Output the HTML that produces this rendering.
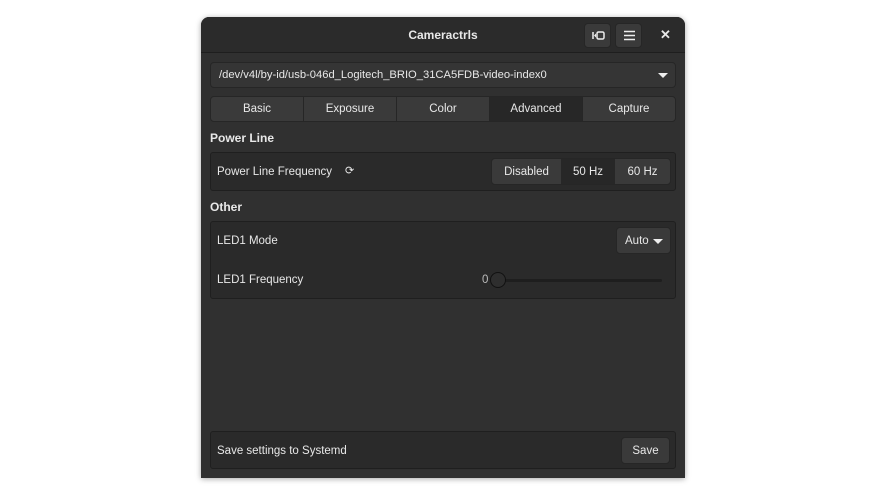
<!DOCTYPE html><html><head><style>
*{box-sizing:border-box;margin:0;padding:0}
body{width:888px;height:500px;background:#fff;font-family:"Liberation Sans",sans-serif;font-size:11.5px;color:#e8e8e8;position:relative;overflow:hidden}
.win{position:absolute;left:201px;top:17px;width:484px;height:461px;background:#303030;border-radius:8px 8px 0 0;box-shadow:0 1px 6px rgba(0,0,0,.35);overflow:hidden}
.hdr{position:absolute;left:0;top:0;width:484px;height:36px;background:#2b2b2b;border-bottom:1px solid #1e1e1e}
.a{position:absolute}
.btn{position:absolute;background:#3a3a3a;border:1px solid #262626;border-radius:4px;text-align:center}
.box{position:absolute;left:9px;width:466px;background:#2a2a2a;border:1px solid #1f1f1f;border-radius:3px}
.lbl{position:absolute;font-size:11.5px}
.h{position:absolute;left:9px;font-weight:bold;font-size:12px}
</style></head><body>
<div class="win">
 <div class="hdr">
  <div class="a" style="left:0;width:484px;top:11px;text-align:center;font-weight:bold;font-size:12px">Cameractrls</div>
  <div class="btn" style="left:383px;top:6px;width:27px;height:25px"><svg width="27" height="23" viewBox="0 0 27 23"><path d="M8 8v7" stroke="#eee" stroke-width="1.5"/><path d="M9 11.5l2-2v4z" fill="#eee"/><rect x="12" y="8" width="7" height="7" rx="1.5" fill="none" stroke="#eee" stroke-width="1.5"/></svg></div>
  <div class="btn" style="left:414px;top:6px;width:27px;height:25px"><svg width="27" height="23" viewBox="0 0 27 23"><path d="M8 7.5h11M8 11.5h11M8 15.5h11" stroke="#eee" stroke-width="1.5"/></svg></div>
  <div class="a" style="left:459px;top:10px;font-size:13px;font-weight:bold">✕</div>
 </div>
 <div class="btn" style="left:9px;top:45px;width:466px;height:26px;text-align:left;background:#353535"><span class="a" style="left:8px;top:6px;font-size:11.2px">/dev/v4l/by-id/usb-046d_Logitech_BRIO_31CA5FDB-video-index0</span><svg class="a" style="left:447px;top:9px" width="10" height="7"><path d="M0 1h10L5 6z" fill="#eee"/></svg></div>
 <div class="a" style="left:9px;top:79px;width:466px;height:26px;border:1px solid #262626;border-radius:4px;background:#3a3a3a;display:flex;overflow:hidden">
  <div style="flex:1;text-align:center;padding-top:6px;border-right:1px solid #262626">Basic</div>
  <div style="flex:1;text-align:center;padding-top:6px;border-right:1px solid #262626">Exposure</div>
  <div style="flex:1;text-align:center;padding-top:6px;border-right:1px solid #262626">Color</div>
  <div style="flex:1;text-align:center;padding-top:6px;border-right:1px solid #262626;background:#272727">Advanced</div>
  <div style="flex:1;text-align:center;padding-top:6px">Capture</div>
 </div>
 <div class="h" style="top:114px">Power Line</div>
 <div class="box" style="top:135px;height:39px">
  <div class="lbl" style="left:6px;top:13px">Power Line Frequency</div>
  <div class="lbl" style="left:134px;top:11px;font-size:11px">⟳</div>
  <div class="a" style="left:280px;top:5px;width:180px;height:27px;border:1px solid #262626;border-radius:4px;background:#3a3a3a;display:flex;overflow:hidden">
   <div style="width:69px;text-align:center;padding-top:7px">Disabled</div>
   <div style="width:54px;text-align:center;padding-top:7px;background:#272727">50 Hz</div>
   <div style="flex:1;text-align:center;padding-top:7px">60 Hz</div>
  </div>
 </div>
 <div class="h" style="top:183px">Other</div>
 <div class="box" style="top:204px;height:78px">
  <div class="lbl" style="left:6px;top:13px">LED1 Mode</div>
  <div class="btn" style="left:405px;top:5px;width:55px;height:27px;text-align:left"><span class="a" style="left:8px;top:7px">Auto</span><svg class="a" style="left:36px;top:10px" width="10" height="7"><path d="M0 1h10L5 6z" fill="#eee"/></svg></div>
  <div class="lbl" style="left:6px;top:52px">LED1 Frequency</div>
  <div class="lbl" style="left:271px;top:52px;color:#bbb">0</div>
  <div class="a" style="left:285px;top:57px;width:166px;height:3px;background:#1e1e1e;border-radius:2px"></div>
  <div class="a" style="left:279px;top:50px;width:16px;height:16px;border-radius:50%;background:#2e2e2e;border:1px solid #111"></div>
 </div>
 <div class="box" style="top:414px;height:38px">
  <div class="lbl" style="left:6px;top:13px">Save settings to Systemd</div>
  <div class="btn" style="left:410px;top:5px;width:49px;height:27px"><span style="position:relative;top:7px">Save</span></div>
 </div>
</div>
</body></html>
